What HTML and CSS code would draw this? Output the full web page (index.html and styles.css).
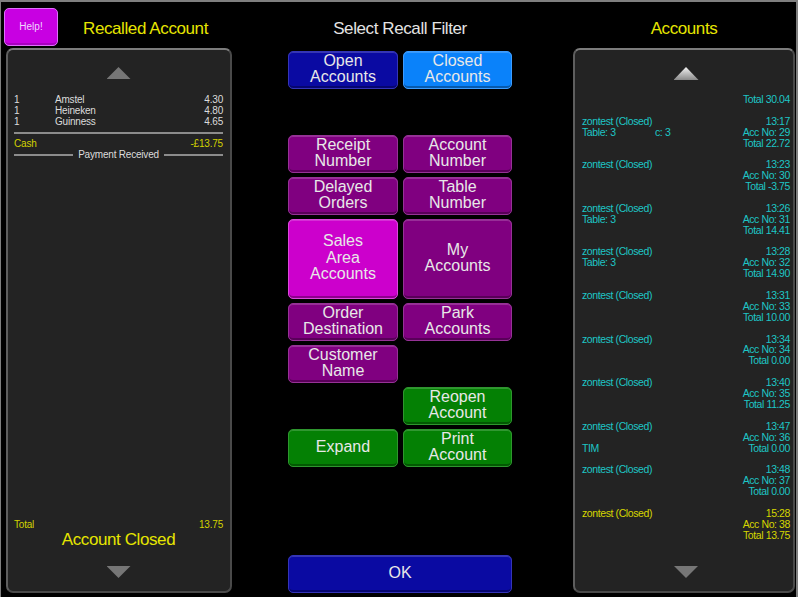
FILE: index.html
```html
<!DOCTYPE html>
<html lang="en">
<head>
    <meta charset="UTF-8">
    <title>Recall Account</title>
    <link rel="stylesheet" href="styles.css">
</head>
<body>

<div class="screen">

    <div class="col col-left">
        <div class="head">
            <button class="help">Help!</button>
            <h2 class="title">Recalled Account</h2>
        </div>
        <div class="panel receipt">
            <div class="arrow up"></div>
            <div class="lines">
                <div class="line"><span class="qty">1</span><span class="name">Amstel</span><span>4.30</span></div>
                <div class="line"><span class="qty">1</span><span class="name">Heineken</span><span>4.80</span></div>
                <div class="line"><span class="qty">1</span><span class="name">Guinness</span><span>4.65</span></div>
            </div>
            <div class="sep"></div>
            <div class="line yellow"><span>Cash</span><span>-£13.75</span></div>
            <div class="paid">Payment Received</div>
            <div class="spacer"></div>
            <div class="line yellow"><span>Total</span><span>13.75</span></div>
            <div class="closed">Account Closed</div>
            <div class="arrow down"></div>
        </div>
    </div>

    <div class="col col-mid">
        <div class="head">
            <h2 class="title white">Select Recall Filter</h2>
        </div>
        <div class="filters">
            <button class="btn navy a-open">Open<br>Accounts</button>
            <button class="btn blue a-closed">Closed<br>Accounts</button>
            <button class="btn purple a-receipt">Receipt<br>Number</button>
            <button class="btn purple a-account">Account<br>Number</button>
            <button class="btn purple a-delayed">Delayed<br>Orders</button>
            <button class="btn purple a-table">Table<br>Number</button>
            <button class="btn magenta a-sales">Sales<br>Area<br>Accounts</button>
            <button class="btn purple a-my">My<br>Accounts</button>
            <button class="btn purple a-order">Order<br>Destination</button>
            <button class="btn purple a-park">Park<br>Accounts</button>
            <button class="btn purple a-customer">Customer<br>Name</button>
            <button class="btn green a-reopen">Reopen<br>Account</button>
            <button class="btn green a-expand">Expand</button>
            <button class="btn green a-print">Print<br>Account</button>
            <button class="btn navy a-ok">OK</button>
        </div>
    </div>

    <div class="col col-right">
        <div class="head">
            <h2 class="title">Accounts</h2>
        </div>
        <div class="panel accounts">
            <div class="arrow up silver"></div>
            <div class="list">
                <div class="row total-all"><span></span><span>Total 30.04</span></div>

                <div class="entry">
                    <div class="row"><span>zontest (Closed)</span><span>13:17</span></div>
                    <div class="row"><span class="table">Table: 3</span><span>c: 3</span><span class="push">Acc No: 29</span></div>
                    <div class="row"><span></span><span>Total 22.72</span></div>
                </div>
                <div class="entry">
                    <div class="row"><span>zontest (Closed)</span><span>13:23</span></div>
                    <div class="row"><span></span><span>Acc No: 30</span></div>
                    <div class="row"><span></span><span>Total -3.75</span></div>
                </div>
                <div class="entry">
                    <div class="row"><span>zontest (Closed)</span><span>13:26</span></div>
                    <div class="row"><span>Table: 3</span><span>Acc No: 31</span></div>
                    <div class="row"><span></span><span>Total 14.41</span></div>
                </div>
                <div class="entry">
                    <div class="row"><span>zontest (Closed)</span><span>13:28</span></div>
                    <div class="row"><span>Table: 3</span><span>Acc No: 32</span></div>
                    <div class="row"><span></span><span>Total 14.90</span></div>
                </div>
                <div class="entry">
                    <div class="row"><span>zontest (Closed)</span><span>13:31</span></div>
                    <div class="row"><span></span><span>Acc No: 33</span></div>
                    <div class="row"><span></span><span>Total 10.00</span></div>
                </div>
                <div class="entry">
                    <div class="row"><span>zontest (Closed)</span><span>13:34</span></div>
                    <div class="row"><span></span><span>Acc No: 34</span></div>
                    <div class="row"><span></span><span>Total 0.00</span></div>
                </div>
                <div class="entry">
                    <div class="row"><span>zontest (Closed)</span><span>13:40</span></div>
                    <div class="row"><span></span><span>Acc No: 35</span></div>
                    <div class="row"><span></span><span>Total 11.25</span></div>
                </div>
                <div class="entry">
                    <div class="row"><span>zontest (Closed)</span><span>13:47</span></div>
                    <div class="row"><span></span><span>Acc No: 36</span></div>
                    <div class="row"><span>TIM</span><span>Total 0.00</span></div>
                </div>
                <div class="entry">
                    <div class="row"><span>zontest (Closed)</span><span>13:48</span></div>
                    <div class="row"><span></span><span>Acc No: 37</span></div>
                    <div class="row"><span></span><span>Total 0.00</span></div>
                </div>
                <div class="entry current">
                    <div class="row"><span>zontest (Closed)</span><span>15:28</span></div>
                    <div class="row"><span></span><span>Acc No: 38</span></div>
                    <div class="row"><span></span><span>Total 13.75</span></div>
                </div>
            </div>
            <div class="spacer"></div>
            <div class="arrow down"></div>
        </div>
    </div>

</div>

</body>
</html>
```

FILE: styles.css
```css
* {
    box-sizing: border-box;
}

html, body {
    margin: 0;
}

body {
    width: 798px;
    height: 597px;
    background: #000;
    border-top: 2px solid #7f7f7f;
    border-left: 1px solid #7f7f7f;
    border-right: 2px solid #7f7f7f;
    font-family: "Liberation Sans", Arial, sans-serif;
    overflow: hidden;
}

.screen {
    display: flex;
    padding: 6px 0 0 3px;
}

.col {
    display: flex;
    flex-direction: column;
}

.col-left {
    width: 229px;
}

.col-mid {
    width: 224px;
    margin-left: 55px;
}

.col-right {
    width: 222px;
    margin-left: 61px;
}

.head {
    display: flex;
    height: 40px;
}

.col-mid .head {
    height: 43px;
}

.title {
    flex: 1;
    margin: 0;
    height: 38px;
    padding-top: 2px;
    line-height: 38px;
    text-align: center;
    font-size: 17px;
    font-weight: normal;
    letter-spacing: -0.4px;
    color: #e6e600;
}

.title.white {
    color: #e4e4e4;
}

.help {
    width: 54px;
    height: 38px;
    padding: 0 0 2px;
    background: #c800e2;
    border: 1px solid #de70fa;
    border-radius: 5px;
    box-shadow: inset 0 -2px 0 rgba(0, 0, 0, 0.15);
    color: #f0d8ff;
    font-family: inherit;
    font-size: 10px;
}

/* panels */

.panel {
    display: flex;
    flex-direction: column;
    height: 545px;
    background: #232323;
    border: 2px solid #4a4a4a;
    border-top-color: #7c7c7c;
    border-left-color: #5e5e5e;
    border-radius: 7px;
}

.receipt {
    width: 226px;
    margin-left: 2px;
    padding: 0 7px 0 6px;
    font-size: 10px;
    color: #dcdcdc;
}

.accounts {
    width: 222px;
    padding: 0 3px 0 7px;
    font-size: 10.5px;
    letter-spacing: -0.4px;
    color: #1ec6c6;
}

.spacer {
    flex: 1;
}

.arrow {
    align-self: center;
    width: 24px;
    height: 12px;
    background: #767676;
}

.arrow.up {
    margin-top: 17px;
    clip-path: polygon(50% 0, 100% 100%, 0 100%);
}

.arrow.down {
    margin-bottom: 13px;
    clip-path: polygon(0 0, 100% 0, 50% 100%);
}

.arrow.silver {
    width: 25px;
    height: 13px;
    background: linear-gradient(#f2f2f2, #8a8a8a);
}

/* receipt */

.lines {
    margin-top: 15px;
}

.line {
    display: flex;
    height: 11px;
    line-height: 11px;
    letter-spacing: -0.2px;
}

.line span:last-child {
    margin-left: auto;
}

.qty {
    width: 41px;
}

.sep {
    height: 2px;
    margin: 5px 0 4px;
    background: #8c8c8c;
}

.yellow {
    color: #d2d200;
}

.paid {
    display: flex;
    align-items: center;
    gap: 5px;
    height: 11px;
    line-height: 11px;
    letter-spacing: -0.2px;
}

.paid::before,
.paid::after {
    content: "";
    flex: 1;
    height: 2px;
    background: #8c8c8c;
}

.closed {
    height: 20px;
    line-height: 20px;
    margin-bottom: 16px;
    text-align: center;
    font-size: 17px;
    letter-spacing: -0.4px;
    color: #e6e600;
}

/* accounts list */

.list {
    margin-top: 14px;
}

.row {
    display: flex;
    justify-content: space-between;
    height: 10.9px;
    line-height: 10.9px;
    white-space: nowrap;
}

.total-all {
    margin-bottom: 10.9px;
}

.entry {
    margin-bottom: 10.9px;
}

.entry.current {
    color: #d6d600;
}

.table {
    width: 73px;
}

.push {
    margin-left: auto;
}

/* filter buttons */

.filters {
    display: grid;
    grid-template-columns: 110px 109px;
    grid-template-rows: repeat(13, 38px);
    gap: 4px 5px;
    grid-template-areas:
        "open closed"
        ". ."
        "receipt account"
        "delayed table"
        "sales my"
        "sales my"
        "order park"
        "customer ."
        ". reopen"
        "expand print"
        ". ."
        ". ."
        "ok ok";
}

.btn {
    display: flex;
    align-items: center;
    justify-content: center;
    padding: 0 0 2px;
    border: 1px solid;
    border-radius: 5px;
    box-shadow: inset 0 1px 0 rgba(255, 255, 255, 0.18), inset 0 -2px 0 rgba(0, 0, 0, 0.3);
    color: #e8e8e8;
    font-family: inherit;
    font-size: 16px;
    line-height: 16.5px;
    text-align: center;
}

.navy {
    background: #0a0aa2;
    border-color: #3434b8;
}

.blue {
    background: #0a82fa;
    border-color: #3c9cff;
}

.purple {
    background: #800080;
    border-color: #963296;
}

.magenta {
    background: #cc00cc;
    border-color: #dc48dc;
}

.green {
    background: #048004;
    border-color: #2e962e;
}

.a-open { grid-area: open; }
.a-closed { grid-area: closed; }
.a-receipt { grid-area: receipt; }
.a-account { grid-area: account; }
.a-delayed { grid-area: delayed; }
.a-table { grid-area: table; }
.a-sales { grid-area: sales; }
.a-my { grid-area: my; }
.a-order { grid-area: order; }
.a-park { grid-area: park; }
.a-customer { grid-area: customer; }
.a-reopen { grid-area: reopen; }
.a-expand { grid-area: expand; }
.a-print { grid-area: print; }
.a-ok { grid-area: ok; }
```
